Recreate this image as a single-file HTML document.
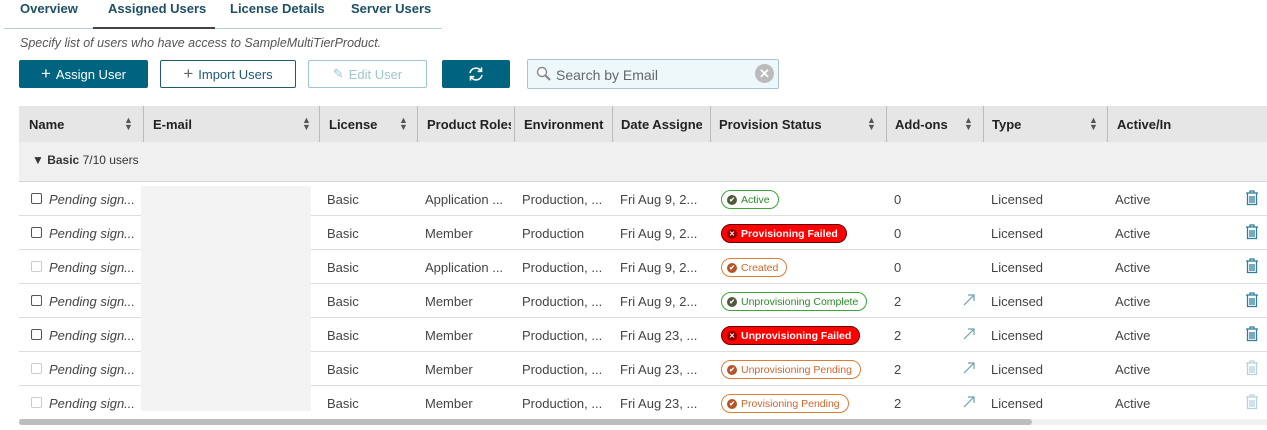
<!DOCTYPE html>
<html><head><meta charset="utf-8"><style>
*{box-sizing:border-box;margin:0;padding:0}
body{width:1267px;height:430px;overflow:hidden;background:#fff;font-family:"Liberation Sans",sans-serif;color:#333;position:relative;font-size:13px}
.a{position:absolute;white-space:nowrap}
.tab{top:1px;font-size:13px;font-weight:bold;color:#1d4f66}
.btn{top:60px;height:28px;border-radius:2px;display:flex;align-items:center;justify-content:center;font-size:13px}
.hd{top:117px;font-weight:bold;font-size:13px;color:#222}
.sep{top:106px;height:36px;width:1px;background:#bbb}
.srt{top:117px;font-size:9px;color:#555;line-height:7px}
.row{left:19px;width:1248px;height:34px;border-bottom:1px solid #ddd}
.c{font-size:13px;color:#444}
.badge{height:19px;border-radius:10px;display:flex;align-items:center;font-size:10.5px;padding:1px 8px 0 5px;gap:4px}
.dot{width:10px;height:10px;border-radius:50%;display:inline-flex;align-items:center;justify-content:center;color:#fff;font-size:7px;font-weight:bold}
.g{border:1.5px solid #3aa53a;color:#2a8a2a}.g .dot{background:#4e5a3a}
.o{border:1.5px solid #e07b35;color:#d0652a}.o .dot{background:#b5532a}
.r{background:#f00;border:1.5px solid #600;color:#fff;font-weight:bold}.r .dot{background:#800}
.cb{width:11px;height:11px;border:1px solid #555;border-radius:2px}
</style></head><body>
<div class="a tab" style="left:20px">Overview</div>
<div class="a tab" style="left:108px">Assigned Users</div>
<div class="a tab" style="left:230px">License Details</div>
<div class="a tab" style="left:351px">Server Users</div>
<div class="a" style="left:4px;top:28px;width:438px;height:1px;background:#b8cdd6"></div>
<div class="a" style="left:93px;top:27px;width:122px;height:2px;background:#444"></div>
<div class="a" style="left:20px;top:36px;font-style:italic;font-size:12.5px;color:#555">Specify list of users who have access to SampleMultiTierProduct.</div>
<div class="a btn" style="left:19px;width:129px;background:#00637f;color:#fff"><span style="font-size:17px;margin-right:5px">+</span>Assign User</div>
<div class="a btn" style="left:160px;width:136px;border:1px solid #1e5a73;color:#1e5a73"><span style="font-size:17px;margin-right:5px;color:#666">+</span>Import Users</div>
<div class="a btn" style="left:308px;width:119px;border:1px solid #9fc6d2;color:#9fc6d2"><span style="margin-right:5px">✎</span>Edit User</div>
<div class="a btn" style="left:442px;width:68px;background:#00637f;color:#fff"><svg width="18" height="18" viewBox="0 0 18 18" fill="none" stroke="#fff" stroke-width="1.6"><path d="M3 8a6 6 0 0 1 11-2"/><path d="M15 10a6 6 0 0 1-11 2"/><path d="M14.5 2.5v3.8h-3.8" /><path d="M3.5 15.5v-3.8h3.8"/></svg></div>
<div class="a" style="left:527px;top:59px;width:252px;height:30px;background:#eef8fb;border:1px solid #a9c4cf;border-radius:2px"></div>
<svg class="a" style="left:536px;top:66px" width="16" height="16" viewBox="0 0 16 16"><circle cx="6" cy="6" r="4.5" fill="#fff" stroke="#888" stroke-width="1.4"/><path d="M9.5 9.5l4.5 4.5" stroke="#888" stroke-width="2.2"/></svg>
<div class="a" style="left:556px;top:67px;font-size:14px;color:#666">Search by Email</div>
<div class="a" style="left:755px;top:64px;width:19px;height:19px;border-radius:50%;background:#bbb;color:#fff;font-size:13px;font-weight:bold;text-align:center;line-height:19px">✕</div>
<div class="a" style="left:19px;top:106px;width:1248px;height:36px;background:#e6e6e6"></div>
<div class="a" style="left:19px;top:142px;width:1248px;height:40px;background:#f0f0f0;border-bottom:1px solid #d8d8d8"></div>
<div class="a sep" style="left:143px"></div><div class="a sep" style="left:319px"></div><div class="a sep" style="left:417px"></div><div class="a sep" style="left:514px"></div><div class="a sep" style="left:612px"></div><div class="a sep" style="left:710px"></div><div class="a sep" style="left:886px"></div><div class="a sep" style="left:983px"></div><div class="a sep" style="left:1107px"></div>
<div class="a hd" style="left:29px">Name</div><div class="a hd" style="left:153px">E-mail</div><div class="a hd" style="left:329px">License</div><div class="a hd" style="left:427px;width:84px;overflow:hidden">Product Roles</div><div class="a hd" style="left:524px">Environment</div><div class="a hd" style="left:621px;width:81px;overflow:hidden">Date Assigned</div><div class="a hd" style="left:719px">Provision Status</div><div class="a hd" style="left:895px">Add-ons</div><div class="a hd" style="left:992px">Type</div><div class="a hd" style="left:1117px">Active/In</div>
<div class="a srt" style="left:124px">▲<br>▼</div><div class="a srt" style="left:302px">▲<br>▼</div><div class="a srt" style="left:399px">▲<br>▼</div><div class="a srt" style="left:867px">▲<br>▼</div><div class="a srt" style="left:964px">▲<br>▼</div><div class="a srt" style="left:1089px">▲<br>▼</div>
<div class="a" style="left:32px;top:153px;font-size:12px;color:#333"><b>▼ Basic</b> 7/10 users</div>

<div class="a row" style="top:182px"></div><div class="a row" style="top:216px"></div><div class="a row" style="top:250px"></div><div class="a row" style="top:284px"></div><div class="a row" style="top:318px"></div><div class="a row" style="top:352px"></div><div class="a row" style="top:386px;border:none"></div>
<div class="a" style="left:141px;top:186px;width:170px;height:225px;background:#f3f3f3"></div>

<div class="a" style="left:31px;top:193px"><div class="cb"></div></div><div class="a c" style="left:49px;top:192px;font-style:italic">Pending sign...</div><div class="a c" style="left:327px;top:192px">Basic</div><div class="a c" style="left:425px;top:192px">Application ...</div><div class="a c" style="left:522px;top:192px">Production, ...</div><div class="a c" style="left:620px;top:192px">Fri Aug 9, 2...</div>
<div class="a badge g" style="left:721px;top:190px"><span class="dot">✔</span>Active</div><div class="a c" style="left:894px;top:192px">0</div><div class="a c" style="left:991px;top:192px">Licensed</div><div class="a c" style="left:1115px;top:192px">Active</div>

<div class="a" style="left:31px;top:227px"><div class="cb"></div></div><div class="a c" style="left:49px;top:226px;font-style:italic">Pending sign...</div><div class="a c" style="left:327px;top:226px">Basic</div><div class="a c" style="left:425px;top:226px">Member</div><div class="a c" style="left:522px;top:226px">Production</div><div class="a c" style="left:620px;top:226px">Fri Aug 9, 2...</div>
<div class="a badge r" style="left:721px;top:224px"><span class="dot">✕</span>Provisioning Failed</div><div class="a c" style="left:894px;top:226px">0</div><div class="a c" style="left:991px;top:226px">Licensed</div><div class="a c" style="left:1115px;top:226px">Active</div>

<div class="a" style="left:31px;top:261px"><div class="cb" style="border-color:#ccc"></div></div><div class="a c" style="left:49px;top:260px;font-style:italic">Pending sign...</div><div class="a c" style="left:327px;top:260px">Basic</div><div class="a c" style="left:425px;top:260px">Application ...</div><div class="a c" style="left:522px;top:260px">Production, ...</div><div class="a c" style="left:620px;top:260px">Fri Aug 9, 2...</div>
<div class="a badge o" style="left:721px;top:258px"><span class="dot">✔</span>Created</div><div class="a c" style="left:894px;top:260px">0</div><div class="a c" style="left:991px;top:260px">Licensed</div><div class="a c" style="left:1115px;top:260px">Active</div>

<div class="a" style="left:31px;top:295px"><div class="cb"></div></div><div class="a c" style="left:49px;top:294px;font-style:italic">Pending sign...</div><div class="a c" style="left:327px;top:294px">Basic</div><div class="a c" style="left:425px;top:294px">Member</div><div class="a c" style="left:522px;top:294px">Production, ...</div><div class="a c" style="left:620px;top:294px">Fri Aug 9, 2...</div>
<div class="a badge g" style="left:721px;top:292px"><span class="dot">✔</span>Unprovisioning Complete</div><div class="a c" style="left:894px;top:294px">2</div><div class="a c" style="left:991px;top:294px">Licensed</div><div class="a c" style="left:1115px;top:294px">Active</div>

<div class="a" style="left:31px;top:329px"><div class="cb"></div></div><div class="a c" style="left:49px;top:328px;font-style:italic">Pending sign...</div><div class="a c" style="left:327px;top:328px">Basic</div><div class="a c" style="left:425px;top:328px">Member</div><div class="a c" style="left:522px;top:328px">Production, ...</div><div class="a c" style="left:620px;top:328px">Fri Aug 23, ...</div>
<div class="a badge r" style="left:721px;top:326px"><span class="dot">✕</span>Unprovisioning Failed</div><div class="a c" style="left:894px;top:328px">2</div><div class="a c" style="left:991px;top:328px">Licensed</div><div class="a c" style="left:1115px;top:328px">Active</div>

<div class="a" style="left:31px;top:363px"><div class="cb" style="border-color:#ccc"></div></div><div class="a c" style="left:49px;top:362px;font-style:italic">Pending sign...</div><div class="a c" style="left:327px;top:362px">Basic</div><div class="a c" style="left:425px;top:362px">Member</div><div class="a c" style="left:522px;top:362px">Production, ...</div><div class="a c" style="left:620px;top:362px">Fri Aug 23, ...</div>
<div class="a badge o" style="left:721px;top:360px"><span class="dot">✔</span>Unprovisioning Pending</div><div class="a c" style="left:894px;top:362px">2</div><div class="a c" style="left:991px;top:362px">Licensed</div><div class="a c" style="left:1115px;top:362px">Active</div>

<div class="a" style="left:31px;top:397px"><div class="cb" style="border-color:#ccc"></div></div><div class="a c" style="left:49px;top:396px;font-style:italic">Pending sign...</div><div class="a c" style="left:327px;top:396px">Basic</div><div class="a c" style="left:425px;top:396px">Member</div><div class="a c" style="left:522px;top:396px">Production, ...</div><div class="a c" style="left:620px;top:396px">Fri Aug 23, ...</div>
<div class="a badge o" style="left:721px;top:394px"><span class="dot">✔</span>Provisioning Pending</div><div class="a c" style="left:894px;top:396px">2</div><div class="a c" style="left:991px;top:396px">Licensed</div><div class="a c" style="left:1115px;top:396px">Active</div>

<svg class="a" style="left:963px;top:294px" width="12" height="12"><path d="M1 11L11 1M5 1h6v6" stroke="#6a9fb5" fill="none" stroke-width="1.2"/></svg>
<svg class="a" style="left:963px;top:328px" width="12" height="12"><path d="M1 11L11 1M5 1h6v6" stroke="#6a9fb5" fill="none" stroke-width="1.2"/></svg>
<svg class="a" style="left:963px;top:362px" width="12" height="12"><path d="M1 11L11 1M5 1h6v6" stroke="#6a9fb5" fill="none" stroke-width="1.2"/></svg>
<svg class="a" style="left:963px;top:396px" width="12" height="12"><path d="M1 11L11 1M5 1h6v6" stroke="#6a9fb5" fill="none" stroke-width="1.2"/></svg>
<svg class="a" style="left:1245px;top:190px" width="14" height="16" viewBox="0 0 14 16"><g stroke="#2f7d9c" fill="none" stroke-width="1.3"><path d="M1 3h12M5 3V1h4v2M2.5 3.5v11h9v-11M5 6v7M7 6v7M9 6v7"/></g></svg>
<svg class="a" style="left:1245px;top:224px" width="14" height="16" viewBox="0 0 14 16"><g stroke="#2f7d9c" fill="none" stroke-width="1.3"><path d="M1 3h12M5 3V1h4v2M2.5 3.5v11h9v-11M5 6v7M7 6v7M9 6v7"/></g></svg>
<svg class="a" style="left:1245px;top:258px" width="14" height="16" viewBox="0 0 14 16"><g stroke="#2f7d9c" fill="none" stroke-width="1.3"><path d="M1 3h12M5 3V1h4v2M2.5 3.5v11h9v-11M5 6v7M7 6v7M9 6v7"/></g></svg>
<svg class="a" style="left:1245px;top:292px" width="14" height="16" viewBox="0 0 14 16"><g stroke="#2f7d9c" fill="none" stroke-width="1.3"><path d="M1 3h12M5 3V1h4v2M2.5 3.5v11h9v-11M5 6v7M7 6v7M9 6v7"/></g></svg>
<svg class="a" style="left:1245px;top:326px" width="14" height="16" viewBox="0 0 14 16"><g stroke="#2f7d9c" fill="none" stroke-width="1.3"><path d="M1 3h12M5 3V1h4v2M2.5 3.5v11h9v-11M5 6v7M7 6v7M9 6v7"/></g></svg>
<svg class="a" style="left:1245px;top:360px" width="14" height="16" viewBox="0 0 14 16"><g stroke="#b5d3de" fill="none" stroke-width="1.3"><path d="M1 3h12M5 3V1h4v2M2.5 3.5v11h9v-11M5 6v7M7 6v7M9 6v7"/></g></svg>
<svg class="a" style="left:1245px;top:394px" width="14" height="16" viewBox="0 0 14 16"><g stroke="#b5d3de" fill="none" stroke-width="1.3"><path d="M1 3h12M5 3V1h4v2M2.5 3.5v11h9v-11M5 6v7M7 6v7M9 6v7"/></g></svg>
<div class="a" style="left:19px;top:419px;width:1248px;height:6px;background:#f1f1f1"></div>
<div class="a" style="left:19px;top:419px;width:1013px;height:6px;background:#bdbdbd;border-radius:3px"></div>
</body></html>
